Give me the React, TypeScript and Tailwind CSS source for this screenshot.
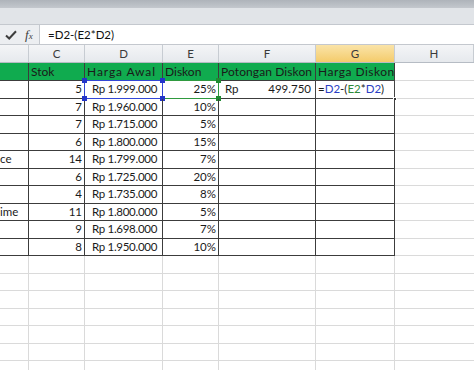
import React from 'react';

const font = { fontFamily: 'Lato, "Open Sans", sans-serif' };

const cols = ['C', 'D', 'E', 'F', 'G', 'H'];

const rows = [
  { b: '', stok: '5', harga: '1.999.000', disk: '25%' },
  { b: '', stok: '7', harga: '1.960.000', disk: '10%' },
  { b: '', stok: '7', harga: '1.715.000', disk: '5%' },
  { b: '', stok: '6', harga: '1.800.000', disk: '15%' },
  { b: 'ce', stok: '14', harga: '1.799.000', disk: '7%' },
  { b: '', stok: '6', harga: '1.725.000', disk: '20%' },
  { b: '', stok: '4', harga: '1.735.000', disk: '8%' },
  { b: 'ime', stok: '11', harga: '1.800.000', disk: '5%' },
  { b: '', stok: '9', harga: '1.698.000', disk: '7%' },
  { b: '', stok: '8', harga: '1.950.000', disk: '10%' },
];

const Handle = ({ pos, color }: { pos: string; color: string }) => (
  <span className={`absolute w-[5px] h-[5px] ${color} ${pos}`} />
);

const Formula = () => (
  <>
    <span>=</span>
    <span className="text-[#2b3fc4]">D2</span>
    <span>-(</span>
    <span className="text-[#2f8a3a]">E2</span>
    <span>*</span>
    <span className="text-[#2b3fc4]">D2</span>
    <span>)</span>
  </>
);

export default function App() {
  return (
    <div className="w-[474px] h-[370px] overflow-hidden bg-white text-[11.5px] text-[#1a1a1a]" style={font}>
      {/* ribbon remnants */}
      <div className="h-[8px] bg-gradient-to-b from-[#aeb3ba] to-[#c3c7cd]" />
      <div className="h-[16px] bg-[#e1e4e8]" />

      {/* formula bar */}
      <div className="h-[21px] flex border-t border-[#c4c8ce] border-b border-[#b9bec5]">
        <div className="w-[40px] flex items-center gap-[8px] pl-[5px] bg-[#eceef1] border-r border-[#c4c8ce]">
          <svg width="12" height="10" viewBox="0 0 12 10">
            <path d="M1 5.5 L4.2 8.5 L11 1.2" fill="none" stroke="#3d3d3d" strokeWidth="2" />
          </svg>
          <span className="text-[#3d3d3d] italic text-[13px] leading-none" style={{ fontFamily: '"Liberation Serif", serif' }}>
            f<span className="text-[9px]">x</span>
          </span>
        </div>
        <div className="flex-1 flex items-center pl-[8px] text-[11.5px] text-[#111]">=D2-(E2*D2)</div>
      </div>

      {/* column headers */}
      <div className="h-[18px] flex border-b border-[#b6bcc4] bg-gradient-to-b from-[#f4f5f7] to-[#e6e9ed] text-[#3a3a3a]">
        <div className="w-[29px] border-r border-[#c7ccd2]" />
        {cols.map((c, i) => (
          <div
            key={c}
            className={[
              'flex items-center justify-center border-r border-[#c7ccd2]',
              i === 0 ? 'w-[56px]' : i === 1 ? 'w-[78px]' : i === 2 ? 'w-[56px]' : i === 3 ? 'w-[97px]' : i === 4 ? 'w-[79px]' : 'flex-1',
              c === 'G' ? 'bg-gradient-to-b from-[#fae4a8] to-[#f4cb6a]' : '',
            ].join(' ')}
          >
            {c}
          </div>
        ))}
      </div>

      {/* header row */}
      <div className="h-[18px] flex leading-[17px] text-[12px] whitespace-nowrap">
        <div className="w-[29px] bg-[#10ab4f] border-r border-b border-[#3c3c3c]" />
        <div className="w-[56px] bg-[#10ab4f] border-r border-b border-[#3c3c3c] pl-[2px]">Stok</div>
        <div className="w-[78px] bg-[#10ab4f] border-r border-b border-[#3c3c3c] pl-[2px] tracking-[0.9px]">Harga Awal</div>
        <div className="w-[56px] bg-[#10ab4f] border-r border-b border-[#3c3c3c] pl-[2px]">Diskon</div>
        <div className="w-[97px] bg-[#10ab4f] border-r border-b border-[#3c3c3c] pl-[2px] tracking-[0.1px]">Potongan Diskon</div>
        <div className="w-[79px] bg-[#10ab4f] border-r border-b border-[#3c3c3c] pl-[2px] tracking-[0.5px]">Harga Diskon</div>
        <div className="flex-1 border-b border-[#dadada]" />
      </div>

      {/* data rows */}
      {rows.map((r, i) => (
        <div key={i} className="h-[17.5px] flex leading-[16.5px] whitespace-nowrap">
          <div className="w-[29px] border-r border-b border-[#3c3c3c] overflow-hidden">{r.b}</div>
          <div className="w-[56px] border-r border-b border-[#3c3c3c] text-right pr-[2px]">{r.stok}</div>
          <div className="relative w-[78px] border-r border-b border-[#3c3c3c] flex justify-between pl-[7px] pr-[5px] tracking-[-0.3px]">
            <span>Rp</span>
            <span>{r.harga}</span>
            {i === 0 && (
              <>
                <span className="absolute inset-[-1px] border border-[#3347d6]" />
                <Handle pos="-left-[3px] -top-[3px]" color="bg-[#2335c9]" />
                <Handle pos="-left-[3px] -bottom-[3px]" color="bg-[#2335c9]" />
              </>
            )}
          </div>
          <div className="relative w-[56px] border-r border-b border-[#3c3c3c] text-right pr-[2px]">
            {r.disk}
            {i === 0 && (
              <>
                <span className="absolute inset-y-[-1px] left-0 right-[-1px] border border-l-0 border-[#2f9a3f]" />
                <Handle pos="-left-[3px] -top-[3px]" color="bg-[#2335c9]" />
                <Handle pos="-left-[3px] -bottom-[3px]" color="bg-[#2335c9]" />
                <Handle pos="-right-[3px] -top-[3px]" color="bg-[#1f8a32]" />
                <Handle pos="-right-[3px] -bottom-[3px]" color="bg-[#1f8a32]" />
              </>
            )}
          </div>
          <div className="w-[97px] border-r border-b border-[#3c3c3c] flex justify-between pl-[6px] pr-[4px]">
            {i === 0 && (
              <>
                <span>Rp</span>
                <span>499.750</span>
              </>
            )}
          </div>
          <div className="relative w-[79px] border-r border-b border-[#3c3c3c] pl-[2px]">
            {i === 0 && (
              <>
                <Formula />
                <span className="absolute inset-[-1px] border border-[#444]" />
                <span className="absolute -right-[3px] -bottom-[3px] w-[4px] h-[4px] bg-[#333] border border-white" />
              </>
            )}
          </div>
          <div className="flex-1 border-b border-[#dadada]" />
        </div>
      ))}

      {/* empty rows */}
      {Array.from({ length: 7 }).map((_, i) => (
        <div key={i} className="h-[17.5px] flex">
          <div className="w-[29px] border-r border-b border-[#dadada]" />
          <div className="w-[56px] border-r border-b border-[#dadada]" />
          <div className="w-[78px] border-r border-b border-[#dadada]" />
          <div className="w-[56px] border-r border-b border-[#dadada]" />
          <div className="w-[97px] border-r border-b border-[#dadada]" />
          <div className="w-[79px] border-r border-b border-[#dadada]" />
          <div className="flex-1 border-b border-[#dadada]" />
        </div>
      ))}
    </div>
  );
}
